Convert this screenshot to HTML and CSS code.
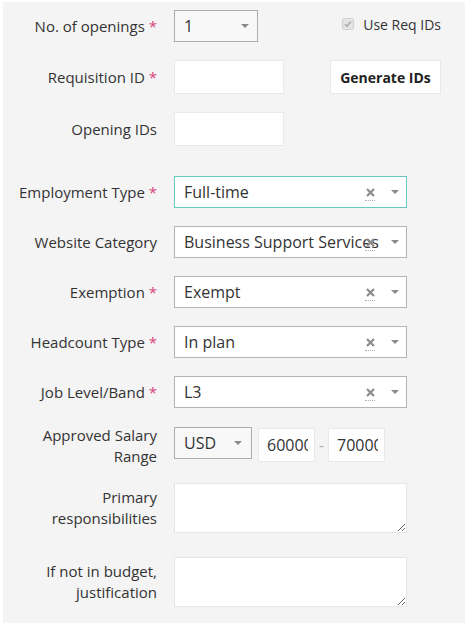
FILE: index.html
```html
<!DOCTYPE html>
<html lang="en">
<head>
<meta charset="utf-8">
<title>Requisition form</title>
<link rel="stylesheet" href="styles.css">
</head>
<body>
<div class="panel">
  <div class="row r1">
    <label class="lbl">No. of openings <span class="req">*</span></label>
    <div class="nselect w-num"><span class="val">1</span><span class="arrow"></span></div>
    <div class="usereq">
      <span class="cbox"><svg width="12" height="12" viewBox="0 0 12 12"><rect x="0.5" y="0.5" width="11" height="11" rx="2" fill="#e4e4e4" stroke="#d0d0d0"/><path d="M3 6.2 L5 8.2 L9 3.6" fill="none" stroke="#a8a8a8" stroke-width="1.6"/></svg></span>
      <span>Use Req IDs</span>
    </div>
  </div>

  <div class="row r2">
    <label class="lbl">Requisition ID <span class="req">*</span></label>
    <input class="tinput w-id" type="text">
    <button class="btn" type="button">Generate IDs</button>
  </div>

  <div class="row r3">
    <label class="lbl">Opening IDs</label>
    <input class="tinput w-id" type="text">
  </div>

  <div class="row r4">
    <label class="lbl">Employment Type <span class="req">*</span></label>
    <div class="s2 focus"><span class="s2text">Full-time</span><abbr class="clear" title="clear"><svg width="9" height="9" viewBox="0 0 9 9"><path d="M1 1 L8 8 M8 1 L1 8" stroke="#8c8c8c" stroke-width="2.2"/></svg></abbr><span class="arrow"></span></div>
  </div>

  <div class="row r5">
    <label class="lbl">Website Category</label>
    <div class="s2"><span class="s2text">Business Support Services</span><abbr class="clear" title="clear"><svg width="9" height="9" viewBox="0 0 9 9"><path d="M1 1 L8 8 M8 1 L1 8" stroke="#8c8c8c" stroke-width="2.2"/></svg></abbr><span class="arrow"></span></div>
  </div>

  <div class="row r5">
    <label class="lbl">Exemption <span class="req">*</span></label>
    <div class="s2"><span class="s2text">Exempt</span><abbr class="clear" title="clear"><svg width="9" height="9" viewBox="0 0 9 9"><path d="M1 1 L8 8 M8 1 L1 8" stroke="#8c8c8c" stroke-width="2.2"/></svg></abbr><span class="arrow"></span></div>
  </div>

  <div class="row r5">
    <label class="lbl">Headcount Type <span class="req">*</span></label>
    <div class="s2"><span class="s2text">In plan</span><abbr class="clear" title="clear"><svg width="9" height="9" viewBox="0 0 9 9"><path d="M1 1 L8 8 M8 1 L1 8" stroke="#8c8c8c" stroke-width="2.2"/></svg></abbr><span class="arrow"></span></div>
  </div>

  <div class="row r5">
    <label class="lbl">Job Level/Band <span class="req">*</span></label>
    <div class="s2"><span class="s2text">L3</span><abbr class="clear" title="clear"><svg width="9" height="9" viewBox="0 0 9 9"><path d="M1 1 L8 8 M8 1 L1 8" stroke="#8c8c8c" stroke-width="2.2"/></svg></abbr><span class="arrow"></span></div>
  </div>

  <div class="row r9">
    <label class="lbl lbl-top">Approved Salary Range</label>
    <div class="salary">
      <div class="nselect w-cur"><span class="val">USD</span><span class="arrow"></span></div>
      <input class="tinput w-sal" type="text" value="60000">
      <span class="dash">-</span>
      <input class="tinput w-sal" type="text" value="70000">
    </div>
  </div>

  <div class="row r10">
    <label class="lbl">Primary responsibilities</label>
    <textarea class="tarea"></textarea>
  </div>

  <div class="row r11">
    <label class="lbl">If not in budget, justification</label>
    <textarea class="tarea"></textarea>
  </div>
</div>
</body>
</html>
```

FILE: styles.css
```css
* { box-sizing: border-box; }

html, body {
  margin: 0;
  padding: 0;
  background: #ffffff;
}

body {
  font-family: "Open Sans", "Liberation Sans", sans-serif;
  font-size: 15px;
  color: #333333;
}

.panel {
  margin: 2px 0 0 3px;
  width: 462px;
  height: 621px;
  background: #f4f4f4;
  padding: 8px 24px 0 0;
}

.row {
  display: flex;
  align-items: center;
}

.r2, .r3 { margin-top: 18px; }
.r4 { margin-top: 30px; }
.r5 { margin-top: 18px; }
.r9 { margin-top: 19px; align-items: flex-start; }
.r10 { margin-top: 16px; }
.r11 { margin-top: 24px; }

.lbl {
  width: 154px;
  flex-shrink: 0;
  margin-right: 17px;
  text-align: right;
  line-height: 21px;
  color: #333333;
}

.lbl-top { margin-top: -2px; padding-left: 30px; }

.req { color: #d8457a; }

/* native-looking select */
.nselect {
  display: flex;
  align-items: center;
  height: 32px;
  border: 1px solid #acacac;
  background: #f8f8f8;
  padding-left: 9px;
  color: #333;
  font-size: 16px;
}
.nselect .val { flex: 1; }
.w-num { width: 84px; padding-right: 8px; }
.w-cur { width: 78px; padding-right: 9px; }

.arrow {
  width: 0;
  height: 0;
  border-left: 4px solid transparent;
  border-right: 4px solid transparent;
  border-top: 4px solid #8a8a8a;
  flex-shrink: 0;
}

.usereq {
  margin-left: auto;
  display: flex;
  align-items: center;
  gap: 9px;
  color: #333;
  font-size: 14px;
  margin-top: -4px;
}
.cbox { display: flex; }

/* text input */
.tinput {
  height: 34px;
  border: 1px solid #e9e9e9;
  background: #ffffff;
  font: inherit;
  font-size: 16px;
  color: #333;
  padding: 0 3px 0 8px;
  outline: none;
}
.w-id { width: 110px; }
.w-sal { width: 57px; height: 34px; padding: 0 6px 0 8px; }

.btn {
  margin-left: auto;
  width: 111px;
  height: 34px;
  border: 1px solid #e8e8e8;
  background: #ffffff;
  font: inherit;
  font-size: 14px;
  font-weight: 700;
  color: #222;
  padding: 0;
}

/* select2-like */
.s2 {
  width: 233px;
  height: 32px;
  border: 1px solid #b4b4b4;
  background: #ffffff;
  display: flex;
  align-items: center;
  padding-left: 9px;
  padding-right: 7px;
  font-size: 16px;
}
.s2.focus { border-color: #68c8c0; }
.s2text {
  flex: 1 1 0;
  min-width: 0;
  white-space: nowrap;
  color: #333;
}
.clear {
  width: 10px;
  height: 14px;
  display: flex;
  justify-content: center;
  align-items: flex-start;
  padding-top: 1px;
  text-decoration: none;
  border-bottom: 1px dotted #b0b0b0;
  margin-right: 16px;
  margin-top: 4px;
  flex-shrink: 0;
}

.salary {
  display: flex;
  align-items: flex-start;
}
.salary .w-sal:first-of-type { margin-left: 6px; }
.salary .w-sal { margin-top: 1px; }
.dash {
  width: 13px;
  text-align: center;
  color: #aaa;
  line-height: 34px;
  margin-top: 1px;
}

.tarea {
  width: 233px;
  height: 50px;
  border: 1px solid #e6e6e6;
  background: #fff;
  font: inherit;
  resize: both;
  outline: none;
  margin: 0;
  display: block;
}
```
